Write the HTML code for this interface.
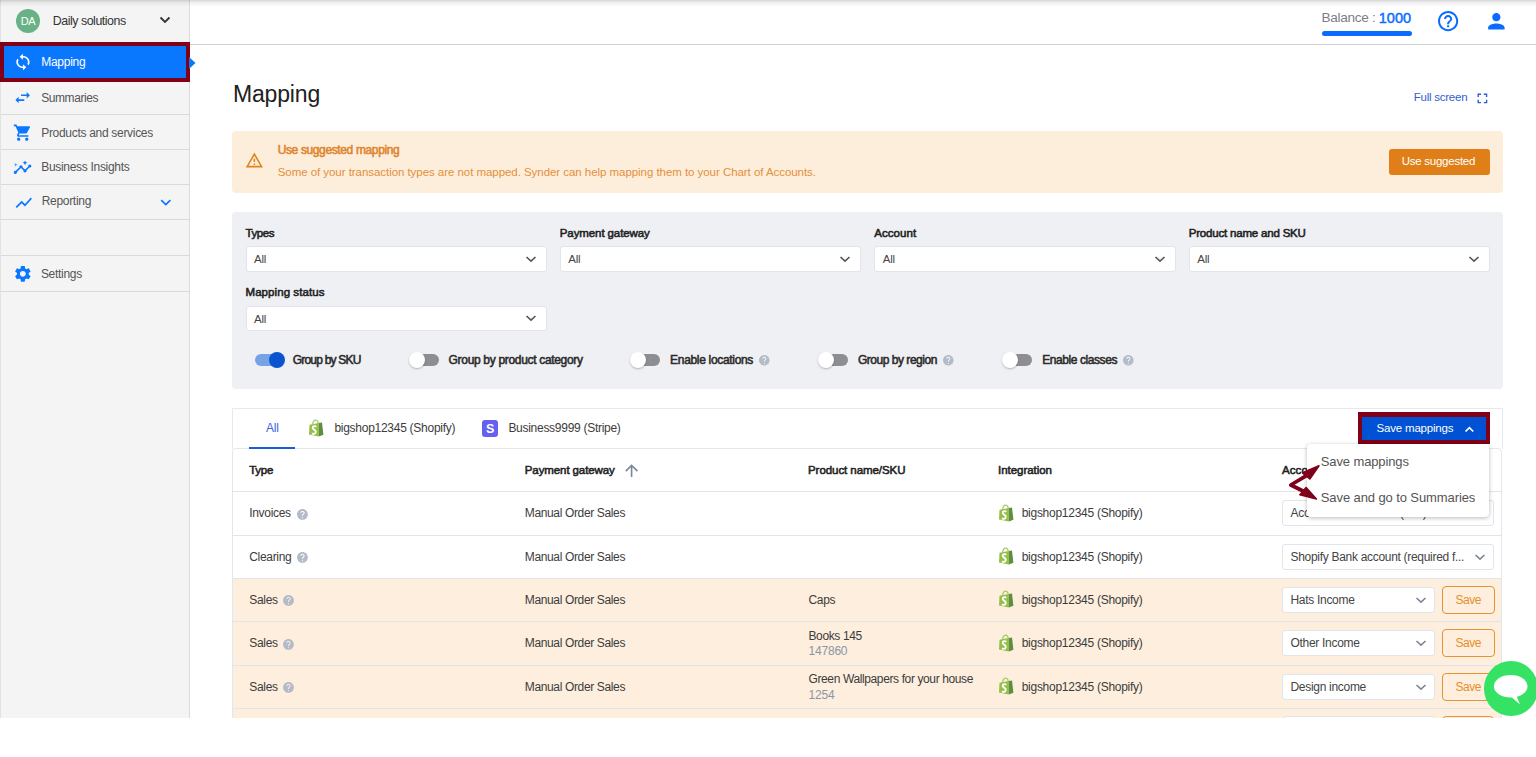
<!DOCTYPE html>
<html><head><meta charset="utf-8"><style>
html,body{margin:0;padding:0;background:#fff;}
body{width:1536px;height:757px;position:relative;overflow:hidden;font-family:"Liberation Sans", sans-serif;}
.t{position:absolute;white-space:nowrap;font-family:"Liberation Sans", sans-serif;}
.r{position:absolute;display:block;}
</style></head><body>
<div class="r" style="left:0.00px;top:0.00px;width:190.00px;height:718.00px;background:#f4f4f4;"></div>
<div class="r" style="left:189.00px;top:0.00px;width:1.00px;height:718.00px;background:#dcdcdc;"></div>
<div class="r" style="left:0.00px;top:0.00px;width:1.00px;height:718.00px;background:#e2e2e2;"></div>
<div class="r" style="left:16.00px;top:9.00px;width:24.00px;height:24.00px;background:#69b186;border-radius:50%;"></div>
<div class="t" style="left:16.00px;top:15.89px;font-size:11px;line-height:11px;color:#fff;font-weight:400;letter-spacing:0px;width:24px;text-align:center;letter-spacing:-0.3px;">DA</div>
<div class="t" style="left:52.80px;top:14.80px;font-size:12.4px;line-height:12.4px;color:#333;font-weight:400;letter-spacing:-0.47px;">Daily solutions</div>
<svg class="r" style="left:159.00px;top:16.00px" width="12" height="8" viewBox="0 0 12 8"><path d="M1.5 1.5 L6 6 L10.5 1.5" fill="none" stroke="#333" stroke-width="1.8"/></svg>
<div class="r" style="left:1.00px;top:114.00px;width:188.00px;height:1.00px;background:#d9d9d9;"></div>
<div class="r" style="left:1.00px;top:149.00px;width:188.00px;height:1.00px;background:#d9d9d9;"></div>
<div class="r" style="left:1.00px;top:184.00px;width:188.00px;height:1.00px;background:#d9d9d9;"></div>
<div class="r" style="left:1.00px;top:219.00px;width:188.00px;height:1.00px;background:#d9d9d9;"></div>
<div class="r" style="left:1.00px;top:255.00px;width:188.00px;height:1.00px;background:#d9d9d9;"></div>
<div class="r" style="left:1.00px;top:291.00px;width:188.00px;height:1.00px;background:#d9d9d9;"></div>
<div class="r" style="left:0.00px;top:41.80px;width:190.00px;height:40.20px;background:#0a77ff;"></div>
<div class="r" style="left:0.00px;top:41.80px;width:190.00px;height:40.20px;box-sizing:border-box;border:4px solid #820016;"></div>
<svg class="r" style="left:189.00px;top:57.00px" width="7" height="12" viewBox="0 0 7 12"><path d="M0 0 L6.5 6 L0 12 Z" fill="#0a77ff"/></svg>
<svg class="r" style="left:13.00px;top:53.00px;overflow:visible" width="19.92" height="18.00" viewBox="0 0 24 24" preserveAspectRatio="none"><path d="M12 4V1L8 5l4 4V6c3.31 0 6 2.69 6 6 0 1.01-.25 1.97-.7 2.8l1.46 1.46C19.54 15.03 20 13.57 20 12c0-4.42-3.58-8-8-8zm0 14c-3.31 0-6-2.69-6-6 0-1.01.25-1.97.7-2.8L5.24 7.74C4.46 8.97 4 10.43 4 12c0 4.42 3.58 8 8 8v3l4-4-4-4v3z" fill="#fff"/></svg>
<div class="t" style="left:41.20px;top:56.04px;font-size:12px;line-height:12px;color:#fff;font-weight:400;letter-spacing:-0.25px;">Mapping</div>
<svg class="r" style="left:13.20px;top:87.50px;overflow:visible" width="19.34" height="19.34" viewBox="0 0 24 24" preserveAspectRatio="none"><path d="M6.99 11L3 15l3.99 4v-3H14v-2H6.99v-3zM21 9l-3.99-4v3H10v2h7.01v3L21 9z" fill="#0a77ff"/></svg>
<div class="t" style="left:41.20px;top:91.54px;font-size:12px;line-height:12px;color:#555;font-weight:400;letter-spacing:-0.43px;">Summaries</div>
<svg class="r" style="left:13.10px;top:122.90px;overflow:visible" width="19.44" height="19.44" viewBox="0 0 24 24" preserveAspectRatio="none"><path d="M7 18c-1.1 0-1.99.9-1.99 2S5.9 22 7 22s2-.9 2-2-.9-2-2-2zM1 2v2h2l3.6 7.59-1.35 2.45c-.16.28-.25.61-.25.96 0 1.1.9 2 2 2h12v-2H7.42c-.14 0-.25-.11-.25-.25l.03-.12.9-1.63h7.45c.75 0 1.41-.41 1.75-1.03l3.58-6.49c.08-.14.12-.31.12-.48 0-.55-.45-1-1-1H5.21l-.94-2H1zm16 16c-1.1 0-1.99.9-1.99 2s.89 2 1.99 2 2-.9 2-2-.9-2-2-2z" fill="#0a77ff"/></svg>
<div class="t" style="left:41.20px;top:126.84px;font-size:12px;line-height:12px;color:#555;font-weight:400;letter-spacing:-0.3px;">Products and services</div>
<svg class="r" style="left:13.10px;top:158.20px;overflow:visible" width="19.20" height="19.20" viewBox="0 0 24 24" preserveAspectRatio="none"><path d="M21 8c-1.45 0-2.26 1.44-1.93 2.51l-3.55 3.56c-.3-.09-.74-.09-1.04 0l-2.55-2.55C12.27 10.45 11.46 9 10 9c-1.45 0-2.27 1.44-1.93 2.52l-4.56 4.55C2.44 15.74 1 16.55 1 18c0 1.1.9 2 2 2 1.45 0 2.26-1.44 1.93-2.51l4.55-4.56c.3.09.74.09 1.04 0l2.55 2.55C12.73 16.55 13.54 18 15 18c1.45 0 2.27-1.44 1.93-2.52l3.56-3.55c1.07.33 2.51-.48 2.51-1.93 0-1.1-.9-2-2-2zM15 9l.94-2.07L18 6l-2.06-.93L15 3l-.92 2.07L12 6l2.08.93zM3.5 11L4 9l2-.5L4 8l-.5-2L3 8l-2 .5L3 9z" fill="#0a77ff"/></svg>
<div class="t" style="left:41.20px;top:161.44px;font-size:12px;line-height:12px;color:#555;font-weight:400;letter-spacing:-0.3px;">Business Insights</div>
<svg class="r" style="left:14.00px;top:192.50px;overflow:visible" width="19.56" height="19.56" viewBox="0 0 24 24" preserveAspectRatio="none"><path d="M3.5 18.49l6-6.01 4 4L22 6.92l-1.41-1.41-7.09 7.97-4-4L2 16.99z" fill="#0a77ff"/></svg>
<div class="t" style="left:41.70px;top:195.24px;font-size:12px;line-height:12px;color:#555;font-weight:400;letter-spacing:-0.3px;">Reporting</div>
<svg class="r" style="left:160.00px;top:199.00px" width="12" height="8" viewBox="0 0 12 8"><path d="M1.2 1.2 L5.8 5.6 L10.4 1.2" fill="none" stroke="#0a77ff" stroke-width="1.7"/></svg>
<svg class="r" style="left:12.50px;top:263.70px;overflow:visible" width="19.68" height="19.68" viewBox="0 0 24 24" preserveAspectRatio="none"><path d="M19.14 12.94c.04-.3.06-.61.06-.94 0-.32-.02-.64-.07-.94l2.03-1.58c.18-.14.23-.41.12-.61l-1.92-3.32c-.12-.22-.37-.29-.59-.22l-2.39.96c-.5-.38-1.03-.7-1.62-.94l-.36-2.54c-.04-.24-.24-.41-.48-.41h-3.84c-.24 0-.43.17-.47.41l-.36 2.54c-.59.24-1.13.57-1.62.94l-2.39-.96c-.22-.08-.47 0-.59.22L2.74 8.87c-.12.21-.08.47.12.61l2.03 1.58c-.05.3-.09.63-.09.94s.02.64.07.94l-2.03 1.58c-.18.14-.23.41-.12.61l1.92 3.32c.12.22.37.29.59.22l2.39-.96c.5.38 1.03.7 1.62.94l.36 2.54c.05.24.24.41.48.41h3.84c.24 0 .44-.17.47-.41l.36-2.54c.59-.24 1.13-.56 1.62-.94l2.39.96c.22.08.47 0 .59-.22l1.92-3.32c.12-.22.07-.47-.12-.61l-2.01-1.58zM12 15.6c-1.98 0-3.6-1.62-3.6-3.6s1.62-3.6 3.6-3.6 3.6 1.62 3.6 3.6-1.62 3.6-3.6 3.6z" fill="#0a77ff"/></svg>
<div class="t" style="left:40.90px;top:267.94px;font-size:12px;line-height:12px;color:#555;font-weight:400;letter-spacing:-0.3px;">Settings</div>
<div class="r" style="left:190.00px;top:44.00px;width:1346.00px;height:1.00px;background:#cfd0d4;"></div>
<div class="r" style="left:0.00px;top:0.00px;width:1536.00px;height:7.00px;background:linear-gradient(rgba(0,0,0,.16),rgba(0,0,0,.05) 40%,rgba(0,0,0,0));"></div>
<div class="t" style="left:1321.50px;top:11.29px;font-size:13.6px;line-height:13.6px;color:#7b7f88;font-weight:400;letter-spacing:-0.3px;">Balance :</div>
<div class="t" style="left:1378.80px;top:10.53px;font-size:14.5px;line-height:14.5px;color:#0a6cff;font-weight:400;letter-spacing:0px;-webkit-text-stroke:0.45px currentColor;">1000</div>
<div class="r" style="left:1321.50px;top:31.20px;width:90.70px;height:5.00px;background:#0a6cff;border-radius:3px;"></div>
<svg class="r" style="left:1435.60px;top:9.00px;overflow:visible" width="24.24" height="24.24" viewBox="0 0 24 24" preserveAspectRatio="none"><path d="M11 18h2v-2h-2v2zm1-16C6.48 2 2 6.48 2 12s4.48 10 10 10 10-4.48 10-10S17.52 2 12 2zm0 18c-4.41 0-8-3.59-8-8s3.59-8 8-8 8 3.59 8 8-3.59 8-8 8zm0-14c-2.21 0-4 1.79-4 4h2c0-1.1.9-2 2-2s2 .9 2 2c0 2-3 1.75-3 5h2c0-2.25 3-2.5 3-5 0-2.21-1.79-4-4-4z" fill="#0a6cff"/></svg>
<svg class="r" style="left:1484.30px;top:8.90px;overflow:visible" width="24.72" height="24.72" viewBox="0 0 24 24" preserveAspectRatio="none"><path d="M12 12c2.21 0 4-1.79 4-4s-1.79-4-4-4-4 1.79-4 4 1.79 4 4 4zm0 2c-2.67 0-8 1.34-8 4v2h16v-2c0-2.66-5.33-4-8-4z" fill="#0a6cff"/></svg>
<div class="t" style="left:232.90px;top:82.63px;font-size:23px;line-height:23px;color:#212121;font-weight:400;letter-spacing:-0.15px;">Mapping</div>
<div class="t" style="left:1413.80px;top:92.27px;font-size:11.5px;line-height:11.5px;color:#2f5fd0;font-weight:400;letter-spacing:-0.25px;">Full screen</div>
<svg class="r" style="left:1474.30px;top:90.00px;overflow:visible" width="16.80" height="16.80" viewBox="0 0 24 24" preserveAspectRatio="none"><path d="M7 14H5v5h5v-2H7v-3zm-2-4h2V7h3V5H5v5zm12 7h-3v2h5v-5h-2v3zM14 5v2h3v3h2V5h-5z" fill="#2f5fd0"/></svg>
<div class="r" style="left:232.00px;top:131.00px;width:1271.00px;height:62.00px;background:#fdeedc;border-radius:4px;"></div>
<svg class="r" style="left:245.40px;top:150.70px;overflow:visible" width="18.72" height="18.72" viewBox="0 0 24 24" preserveAspectRatio="none"><path d="M12 5.99L19.53 19H4.47L12 5.99M12 2L1 21h22L12 2zm1 14h-2v2h2v-2zm0-6h-2v4h2v-4z" fill="#e0821e"/></svg>
<div class="t" style="left:277.70px;top:143.84px;font-size:12px;line-height:12px;color:#e0842a;font-weight:400;letter-spacing:-0.37px;-webkit-text-stroke:0.55px currentColor;">Use suggested mapping</div>
<div class="t" style="left:277.70px;top:167.17px;font-size:11.5px;line-height:11.5px;color:#e58f3a;font-weight:400;letter-spacing:-0.05px;">Some of your transaction types are not mapped. Synder can help mapping them to your Chart of Accounts.</div>
<div class="r" style="left:1389.20px;top:148.60px;width:100.60px;height:26.00px;background:#e07f17;border-radius:3px;"></div>
<div class="t" style="left:1401.70px;top:155.87px;font-size:11.5px;line-height:11.5px;color:#fff;font-weight:400;letter-spacing:-0.25px;">Use suggested</div>
<div class="r" style="left:232.00px;top:212.00px;width:1271.00px;height:176.50px;background:#eff0f4;border-radius:4px;"></div>
<div class="t" style="left:245.50px;top:227.57px;font-size:11.5px;line-height:11.5px;color:#222;font-weight:400;letter-spacing:-0.42px;-webkit-text-stroke:0.55px currentColor;">Types</div>
<div class="r" style="left:245.50px;top:246.00px;width:301.50px;height:25.50px;background:#fff;box-sizing:border-box;border:1px solid #e1e4ea;border-radius:3px;"></div>
<div class="t" style="left:254.00px;top:254.22px;font-size:11.5px;line-height:11.5px;color:#444;font-weight:400;letter-spacing:-0.2px;">All</div>
<svg class="r" style="left:525.00px;top:254.75px" width="12" height="8" viewBox="0 0 12 8"><path d="M1.5 2 L6 6.2 L10.5 2" fill="none" stroke="#555" stroke-width="1.6"/></svg>
<div class="t" style="left:559.80px;top:227.57px;font-size:11.5px;line-height:11.5px;color:#222;font-weight:400;letter-spacing:-0.1px;-webkit-text-stroke:0.55px currentColor;">Payment gateway</div>
<div class="r" style="left:559.80px;top:246.00px;width:301.50px;height:25.50px;background:#fff;box-sizing:border-box;border:1px solid #e1e4ea;border-radius:3px;"></div>
<div class="t" style="left:568.30px;top:254.22px;font-size:11.5px;line-height:11.5px;color:#444;font-weight:400;letter-spacing:-0.2px;">All</div>
<svg class="r" style="left:839.30px;top:254.75px" width="12" height="8" viewBox="0 0 12 8"><path d="M1.5 2 L6 6.2 L10.5 2" fill="none" stroke="#555" stroke-width="1.6"/></svg>
<div class="t" style="left:874.20px;top:227.57px;font-size:11.5px;line-height:11.5px;color:#222;font-weight:400;letter-spacing:0.07px;-webkit-text-stroke:0.55px currentColor;">Account</div>
<div class="r" style="left:874.20px;top:246.00px;width:301.50px;height:25.50px;background:#fff;box-sizing:border-box;border:1px solid #e1e4ea;border-radius:3px;"></div>
<div class="t" style="left:882.70px;top:254.22px;font-size:11.5px;line-height:11.5px;color:#444;font-weight:400;letter-spacing:-0.2px;">All</div>
<svg class="r" style="left:1153.70px;top:254.75px" width="12" height="8" viewBox="0 0 12 8"><path d="M1.5 2 L6 6.2 L10.5 2" fill="none" stroke="#555" stroke-width="1.6"/></svg>
<div class="t" style="left:1188.70px;top:227.57px;font-size:11.5px;line-height:11.5px;color:#222;font-weight:400;letter-spacing:-0.19px;-webkit-text-stroke:0.55px currentColor;">Product name and SKU</div>
<div class="r" style="left:1188.70px;top:246.00px;width:301.50px;height:25.50px;background:#fff;box-sizing:border-box;border:1px solid #e1e4ea;border-radius:3px;"></div>
<div class="t" style="left:1197.20px;top:254.22px;font-size:11.5px;line-height:11.5px;color:#444;font-weight:400;letter-spacing:-0.2px;">All</div>
<svg class="r" style="left:1468.20px;top:254.75px" width="12" height="8" viewBox="0 0 12 8"><path d="M1.5 2 L6 6.2 L10.5 2" fill="none" stroke="#555" stroke-width="1.6"/></svg>
<div class="t" style="left:245.50px;top:287.47px;font-size:11.5px;line-height:11.5px;color:#222;font-weight:400;letter-spacing:0.07px;-webkit-text-stroke:0.55px currentColor;">Mapping status</div>
<div class="r" style="left:245.50px;top:305.50px;width:301.50px;height:25.50px;background:#fff;box-sizing:border-box;border:1px solid #e1e4ea;border-radius:3px;"></div>
<div class="t" style="left:254.00px;top:313.72px;font-size:11.5px;line-height:11.5px;color:#444;font-weight:400;letter-spacing:-0.2px;">All</div>
<svg class="r" style="left:525.00px;top:314.25px" width="12" height="8" viewBox="0 0 12 8"><path d="M1.5 2 L6 6.2 L10.5 2" fill="none" stroke="#555" stroke-width="1.6"/></svg>
<div class="r" style="left:255.00px;top:354.20px;width:28.00px;height:11.80px;background:#75a3e6;border-radius:6px;"></div>
<div class="r" style="left:269.00px;top:352.00px;width:16.00px;height:16.00px;background:#0a55cf;border-radius:50%;"></div>
<div class="t" style="left:292.70px;top:354.24px;font-size:12px;line-height:12px;color:#2b2b2b;font-weight:400;letter-spacing:-0.79px;-webkit-text-stroke:0.55px #2b2b2b;">Group by SKU</div>
<div class="r" style="left:411.00px;top:354.20px;width:28.00px;height:11.80px;background:#8d8e93;border-radius:6px;"></div>
<div class="r" style="left:409.00px;top:352.00px;width:16.00px;height:16.00px;background:#fff;border-radius:50%;box-shadow:0 1px 2px rgba(0,0,0,.25);"></div>
<div class="t" style="left:448.60px;top:354.24px;font-size:12px;line-height:12px;color:#2b2b2b;font-weight:400;letter-spacing:-0.32px;-webkit-text-stroke:0.55px #2b2b2b;">Group by product category</div>
<div class="r" style="left:632.00px;top:354.20px;width:28.00px;height:11.80px;background:#8d8e93;border-radius:6px;"></div>
<div class="r" style="left:630.00px;top:352.00px;width:16.00px;height:16.00px;background:#fff;border-radius:50%;box-shadow:0 1px 2px rgba(0,0,0,.25);"></div>
<div class="t" style="left:670.10px;top:354.24px;font-size:12px;line-height:12px;color:#2b2b2b;font-weight:400;letter-spacing:-0.32px;-webkit-text-stroke:0.55px #2b2b2b;">Enable locations</div>
<svg class="r" style="left:758.35px;top:353.95px;overflow:visible" width="12.60" height="12.60" viewBox="0 0 24 24" preserveAspectRatio="none"><path d="M12 2C6.48 2 2 6.48 2 12s4.48 10 10 10 10-4.48 10-10S17.52 2 12 2zm1 17h-2v-2h2v2zm2.07-7.75l-.9.92C13.45 12.9 13 13.5 13 15h-2v-.5c0-1.1.45-2.1 1.17-2.83l1.24-1.26c.37-.36.59-.86.59-1.41 0-1.1-.9-2-2-2s-2 .9-2 2H8c0-2.21 1.79-4 4-4s4 1.79 4 4c0 .88-.36 1.68-.93 2.25z" fill="#b3bac8"/></svg>
<div class="r" style="left:820.00px;top:354.20px;width:28.00px;height:11.80px;background:#8d8e93;border-radius:6px;"></div>
<div class="r" style="left:818.00px;top:352.00px;width:16.00px;height:16.00px;background:#fff;border-radius:50%;box-shadow:0 1px 2px rgba(0,0,0,.25);"></div>
<div class="t" style="left:857.90px;top:354.24px;font-size:12px;line-height:12px;color:#2b2b2b;font-weight:400;letter-spacing:-0.47px;-webkit-text-stroke:0.55px #2b2b2b;">Group by region</div>
<svg class="r" style="left:942.15px;top:353.95px;overflow:visible" width="12.60" height="12.60" viewBox="0 0 24 24" preserveAspectRatio="none"><path d="M12 2C6.48 2 2 6.48 2 12s4.48 10 10 10 10-4.48 10-10S17.52 2 12 2zm1 17h-2v-2h2v2zm2.07-7.75l-.9.92C13.45 12.9 13 13.5 13 15h-2v-.5c0-1.1.45-2.1 1.17-2.83l1.24-1.26c.37-.36.59-.86.59-1.41 0-1.1-.9-2-2-2s-2 .9-2 2H8c0-2.21 1.79-4 4-4s4 1.79 4 4c0 .88-.36 1.68-.93 2.25z" fill="#b3bac8"/></svg>
<div class="r" style="left:1003.70px;top:354.20px;width:28.00px;height:11.80px;background:#8d8e93;border-radius:6px;"></div>
<div class="r" style="left:1001.70px;top:352.00px;width:16.00px;height:16.00px;background:#fff;border-radius:50%;box-shadow:0 1px 2px rgba(0,0,0,.25);"></div>
<div class="t" style="left:1042.20px;top:354.24px;font-size:12px;line-height:12px;color:#2b2b2b;font-weight:400;letter-spacing:-0.42px;-webkit-text-stroke:0.55px #2b2b2b;">Enable classes</div>
<svg class="r" style="left:1121.65px;top:353.95px;overflow:visible" width="12.60" height="12.60" viewBox="0 0 24 24" preserveAspectRatio="none"><path d="M12 2C6.48 2 2 6.48 2 12s4.48 10 10 10 10-4.48 10-10S17.52 2 12 2zm1 17h-2v-2h2v2zm2.07-7.75l-.9.92C13.45 12.9 13 13.5 13 15h-2v-.5c0-1.1.45-2.1 1.17-2.83l1.24-1.26c.37-.36.59-.86.59-1.41 0-1.1-.9-2-2-2s-2 .9-2 2H8c0-2.21 1.79-4 4-4s4 1.79 4 4c0 .88-.36 1.68-.93 2.25z" fill="#b3bac8"/></svg>
<div class="r" style="left:232.00px;top:408.00px;width:1271.00px;height:41.00px;box-sizing:border-box;border:1px solid #e6e9f0;border-bottom:none;background:#fff;"></div>
<div class="r" style="left:232.00px;top:448.00px;width:1270.00px;height:292.00px;box-sizing:border-box;border:1px solid #e3e6ee;border-radius:4px 4px 0 0;background:#fff;"></div>
<div class="t" style="left:266.00px;top:421.84px;font-size:12px;line-height:12px;color:#3d63dd;font-weight:400;letter-spacing:-0.2px;">All</div>
<div class="r" style="left:249.00px;top:446.50px;width:46.00px;height:2.00px;background:#1a5bd6;"></div>
<svg class="r" style="left:304.00px;top:416.00px" width="24" height="24" viewBox="0 0 24 24"><path d="M8.6 8.4 C9 5.6 10.2 4.2 11.6 4.2 C13 4.2 13.9 5.4 14.3 7.2" fill="none" stroke="#a6c96a" stroke-width="1.3"/><path d="M5.5 8.8 L14.8 6.9 L14.8 20.6 L5 18.6 Z" fill="#95bf47"/><path d="M14.8 6.9 L18 6.5 L19.4 18.8 L14.8 20.6 Z" fill="#5e8e3e"/><path d="M12.3 10.8 C11.3 9.8 8.6 9.7 8.7 11.9 C8.8 13.8 12 13.5 11.8 15.9 C11.6 18.2 9.2 18.3 8.1 17.3" fill="none" stroke="#fff" stroke-width="1.9"/></svg>
<div class="t" style="left:334.40px;top:421.84px;font-size:12px;line-height:12px;color:#3c3c3c;font-weight:400;letter-spacing:-0.27px;">bigshop12345 (Shopify)</div>
<div class="r" style="left:482.00px;top:420.30px;width:16.30px;height:16.70px;background:#6560f0;border-radius:3px;"></div>
<div class="t" style="left:482.00px;top:422.82px;font-size:12.5px;line-height:12.5px;color:#fff;font-weight:700;letter-spacing:0px;width:16.3px;text-align:center;">S</div>
<div class="t" style="left:508.40px;top:421.84px;font-size:12px;line-height:12px;color:#3c3c3c;font-weight:400;letter-spacing:-0.28px;">Business9999 (Stripe)</div>
<div class="t" style="left:249.20px;top:464.77px;font-size:11.5px;line-height:11.5px;color:#222;font-weight:400;letter-spacing:-0.25px;-webkit-text-stroke:0.55px currentColor;">Type</div>
<div class="t" style="left:524.80px;top:464.77px;font-size:11.5px;line-height:11.5px;color:#222;font-weight:400;letter-spacing:-0.1px;-webkit-text-stroke:0.55px currentColor;">Payment gateway</div>
<svg class="r" style="left:621.60px;top:460.80px;overflow:visible" width="19.20" height="19.20" viewBox="0 0 24 24" preserveAspectRatio="none"><path d="M4 12l1.41 1.41L11 7.83V20h2V7.83l5.58 5.59L20 12l-8-8-8 8z" fill="#7d8696"/></svg>
<div class="t" style="left:808.00px;top:464.77px;font-size:11.5px;line-height:11.5px;color:#222;font-weight:400;letter-spacing:-0.06px;-webkit-text-stroke:0.55px currentColor;">Product name/SKU</div>
<div class="t" style="left:998.00px;top:464.77px;font-size:11.5px;line-height:11.5px;color:#222;font-weight:400;letter-spacing:-0.04px;-webkit-text-stroke:0.55px currentColor;">Integration</div>
<div class="t" style="left:1282.00px;top:464.77px;font-size:11.5px;line-height:11.5px;color:#222;font-weight:400;letter-spacing:0.07px;-webkit-text-stroke:0.55px currentColor;">Account</div>
<div class="r" style="left:233.00px;top:578.00px;width:1268.00px;height:162.00px;background:#fdeedd;"></div>
<div class="r" style="left:233.00px;top:491.00px;width:1268.00px;height:1.00px;background:#e2e4e9;"></div>
<div class="r" style="left:233.00px;top:535.00px;width:1268.00px;height:1.00px;background:#e2e4e9;"></div>
<div class="r" style="left:233.00px;top:578.00px;width:1268.00px;height:1.00px;background:#e2e4e9;"></div>
<div class="r" style="left:233.00px;top:621.00px;width:1268.00px;height:1.00px;background:#e2e4e9;"></div>
<div class="r" style="left:233.00px;top:665.00px;width:1268.00px;height:1.00px;background:#e2e4e9;"></div>
<div class="r" style="left:233.00px;top:708.00px;width:1268.00px;height:1.00px;background:#e2e4e9;"></div>
<div class="t" style="left:249.20px;top:507.04px;font-size:12px;line-height:12px;color:#3c3c3c;font-weight:400;letter-spacing:-0.3px;">Invoices</div>
<svg class="r" style="left:296.25px;top:507.50px;overflow:visible" width="12.96" height="12.96" viewBox="0 0 24 24" preserveAspectRatio="none"><path d="M12 2C6.48 2 2 6.48 2 12s4.48 10 10 10 10-4.48 10-10S17.52 2 12 2zm1 17h-2v-2h2v2zm2.07-7.75l-.9.92C13.45 12.9 13 13.5 13 15h-2v-.5c0-1.1.45-2.1 1.17-2.83l1.24-1.26c.37-.36.59-.86.59-1.41 0-1.1-.9-2-2-2s-2 .9-2 2H8c0-2.21 1.79-4 4-4s4 1.79 4 4c0 .88-.36 1.68-.93 2.25z" fill="#b3bac8"/></svg>
<div class="t" style="left:524.80px;top:507.04px;font-size:12px;line-height:12px;color:#3c3c3c;font-weight:400;letter-spacing:-0.36px;">Manual Order Sales</div>
<svg class="r" style="left:993.80px;top:500.50px" width="24" height="24" viewBox="0 0 24 24"><path d="M8.6 8.4 C9 5.6 10.2 4.2 11.6 4.2 C13 4.2 13.9 5.4 14.3 7.2" fill="none" stroke="#a6c96a" stroke-width="1.3"/><path d="M5.5 8.8 L14.8 6.9 L14.8 20.6 L5 18.6 Z" fill="#95bf47"/><path d="M14.8 6.9 L18 6.5 L19.4 18.8 L14.8 20.6 Z" fill="#5e8e3e"/><path d="M12.3 10.8 C11.3 9.8 8.6 9.7 8.7 11.9 C8.8 13.8 12 13.5 11.8 15.9 C11.6 18.2 9.2 18.3 8.1 17.3" fill="none" stroke="#fff" stroke-width="1.9"/></svg>
<div class="t" style="left:1021.70px;top:507.04px;font-size:12px;line-height:12px;color:#3c3c3c;font-weight:400;letter-spacing:-0.27px;">bigshop12345 (Shopify)</div>
<div class="r" style="left:1282.00px;top:500.00px;width:212.00px;height:25.50px;background:#fff;box-sizing:border-box;border:1px solid #e1e4ea;border-radius:3px;"></div>
<div class="t" style="left:1290.50px;top:506.79px;font-size:12px;line-height:12px;color:#444;font-weight:400;letter-spacing:-0.3px;">Accounts Receivable (A/R)</div>
<svg class="r" style="left:1473.70px;top:508.75px" width="12" height="8" viewBox="0 0 12 8"><path d="M1.5 2 L6 6.2 L10.5 2" fill="none" stroke="#7d8696" stroke-width="1.6"/></svg>
<div class="t" style="left:249.20px;top:550.54px;font-size:12px;line-height:12px;color:#3c3c3c;font-weight:400;letter-spacing:-0.3px;">Clearing</div>
<svg class="r" style="left:296.25px;top:551.00px;overflow:visible" width="12.96" height="12.96" viewBox="0 0 24 24" preserveAspectRatio="none"><path d="M12 2C6.48 2 2 6.48 2 12s4.48 10 10 10 10-4.48 10-10S17.52 2 12 2zm1 17h-2v-2h2v2zm2.07-7.75l-.9.92C13.45 12.9 13 13.5 13 15h-2v-.5c0-1.1.45-2.1 1.17-2.83l1.24-1.26c.37-.36.59-.86.59-1.41 0-1.1-.9-2-2-2s-2 .9-2 2H8c0-2.21 1.79-4 4-4s4 1.79 4 4c0 .88-.36 1.68-.93 2.25z" fill="#b3bac8"/></svg>
<div class="t" style="left:524.80px;top:550.54px;font-size:12px;line-height:12px;color:#3c3c3c;font-weight:400;letter-spacing:-0.36px;">Manual Order Sales</div>
<svg class="r" style="left:993.80px;top:544.00px" width="24" height="24" viewBox="0 0 24 24"><path d="M8.6 8.4 C9 5.6 10.2 4.2 11.6 4.2 C13 4.2 13.9 5.4 14.3 7.2" fill="none" stroke="#a6c96a" stroke-width="1.3"/><path d="M5.5 8.8 L14.8 6.9 L14.8 20.6 L5 18.6 Z" fill="#95bf47"/><path d="M14.8 6.9 L18 6.5 L19.4 18.8 L14.8 20.6 Z" fill="#5e8e3e"/><path d="M12.3 10.8 C11.3 9.8 8.6 9.7 8.7 11.9 C8.8 13.8 12 13.5 11.8 15.9 C11.6 18.2 9.2 18.3 8.1 17.3" fill="none" stroke="#fff" stroke-width="1.9"/></svg>
<div class="t" style="left:1021.70px;top:550.54px;font-size:12px;line-height:12px;color:#3c3c3c;font-weight:400;letter-spacing:-0.27px;">bigshop12345 (Shopify)</div>
<div class="r" style="left:1282.00px;top:544.00px;width:212.00px;height:25.50px;background:#fff;box-sizing:border-box;border:1px solid #e1e4ea;border-radius:3px;"></div>
<div class="t" style="left:1290.50px;top:550.79px;font-size:12px;line-height:12px;color:#444;font-weight:400;letter-spacing:-0.3px;">Shopify Bank account (required f...</div>
<svg class="r" style="left:1473.70px;top:552.75px" width="12" height="8" viewBox="0 0 12 8"><path d="M1.5 2 L6 6.2 L10.5 2" fill="none" stroke="#7d8696" stroke-width="1.6"/></svg>
<div class="t" style="left:249.20px;top:593.54px;font-size:12px;line-height:12px;color:#3c3c3c;font-weight:400;letter-spacing:-0.3px;">Sales</div>
<svg class="r" style="left:281.55px;top:594.00px;overflow:visible" width="12.96" height="12.96" viewBox="0 0 24 24" preserveAspectRatio="none"><path d="M12 2C6.48 2 2 6.48 2 12s4.48 10 10 10 10-4.48 10-10S17.52 2 12 2zm1 17h-2v-2h2v2zm2.07-7.75l-.9.92C13.45 12.9 13 13.5 13 15h-2v-.5c0-1.1.45-2.1 1.17-2.83l1.24-1.26c.37-.36.59-.86.59-1.41 0-1.1-.9-2-2-2s-2 .9-2 2H8c0-2.21 1.79-4 4-4s4 1.79 4 4c0 .88-.36 1.68-.93 2.25z" fill="#b3bac8"/></svg>
<div class="t" style="left:524.80px;top:593.54px;font-size:12px;line-height:12px;color:#3c3c3c;font-weight:400;letter-spacing:-0.36px;">Manual Order Sales</div>
<div class="t" style="left:808.50px;top:593.54px;font-size:12px;line-height:12px;color:#3c3c3c;font-weight:400;letter-spacing:-0.3px;">Caps</div>
<svg class="r" style="left:993.80px;top:587.00px" width="24" height="24" viewBox="0 0 24 24"><path d="M8.6 8.4 C9 5.6 10.2 4.2 11.6 4.2 C13 4.2 13.9 5.4 14.3 7.2" fill="none" stroke="#a6c96a" stroke-width="1.3"/><path d="M5.5 8.8 L14.8 6.9 L14.8 20.6 L5 18.6 Z" fill="#95bf47"/><path d="M14.8 6.9 L18 6.5 L19.4 18.8 L14.8 20.6 Z" fill="#5e8e3e"/><path d="M12.3 10.8 C11.3 9.8 8.6 9.7 8.7 11.9 C8.8 13.8 12 13.5 11.8 15.9 C11.6 18.2 9.2 18.3 8.1 17.3" fill="none" stroke="#fff" stroke-width="1.9"/></svg>
<div class="t" style="left:1021.70px;top:593.54px;font-size:12px;line-height:12px;color:#3c3c3c;font-weight:400;letter-spacing:-0.27px;">bigshop12345 (Shopify)</div>
<div class="r" style="left:1282.00px;top:587.00px;width:153.00px;height:25.50px;background:#fff;box-sizing:border-box;border:1px solid #e1e4ea;border-radius:3px;"></div>
<div class="t" style="left:1290.50px;top:593.79px;font-size:12px;line-height:12px;color:#444;font-weight:400;letter-spacing:-0.3px;">Hats Income</div>
<svg class="r" style="left:1414.50px;top:595.75px" width="12" height="8" viewBox="0 0 12 8"><path d="M1.5 2 L6 6.2 L10.5 2" fill="none" stroke="#7d8696" stroke-width="1.6"/></svg>
<div class="r" style="left:1442.00px;top:586.00px;width:52.50px;height:27.50px;box-sizing:border-box;border:1px solid #e79335;border-radius:4px;"></div>
<div class="t" style="left:1455.50px;top:593.54px;font-size:12px;line-height:12px;color:#e58e2b;font-weight:400;letter-spacing:-0.45px;">Save</div>
<div class="t" style="left:249.20px;top:637.04px;font-size:12px;line-height:12px;color:#3c3c3c;font-weight:400;letter-spacing:-0.3px;">Sales</div>
<svg class="r" style="left:281.55px;top:637.50px;overflow:visible" width="12.96" height="12.96" viewBox="0 0 24 24" preserveAspectRatio="none"><path d="M12 2C6.48 2 2 6.48 2 12s4.48 10 10 10 10-4.48 10-10S17.52 2 12 2zm1 17h-2v-2h2v2zm2.07-7.75l-.9.92C13.45 12.9 13 13.5 13 15h-2v-.5c0-1.1.45-2.1 1.17-2.83l1.24-1.26c.37-.36.59-.86.59-1.41 0-1.1-.9-2-2-2s-2 .9-2 2H8c0-2.21 1.79-4 4-4s4 1.79 4 4c0 .88-.36 1.68-.93 2.25z" fill="#b3bac8"/></svg>
<div class="t" style="left:524.80px;top:637.04px;font-size:12px;line-height:12px;color:#3c3c3c;font-weight:400;letter-spacing:-0.36px;">Manual Order Sales</div>
<div class="t" style="left:808.50px;top:629.64px;font-size:12px;line-height:12px;color:#3c3c3c;font-weight:400;letter-spacing:-0.38px;">Books 145</div>
<div class="t" style="left:808.50px;top:645.14px;font-size:12px;line-height:12px;color:#8a96a8;font-weight:400;letter-spacing:-0.2px;">147860</div>
<svg class="r" style="left:993.80px;top:630.50px" width="24" height="24" viewBox="0 0 24 24"><path d="M8.6 8.4 C9 5.6 10.2 4.2 11.6 4.2 C13 4.2 13.9 5.4 14.3 7.2" fill="none" stroke="#a6c96a" stroke-width="1.3"/><path d="M5.5 8.8 L14.8 6.9 L14.8 20.6 L5 18.6 Z" fill="#95bf47"/><path d="M14.8 6.9 L18 6.5 L19.4 18.8 L14.8 20.6 Z" fill="#5e8e3e"/><path d="M12.3 10.8 C11.3 9.8 8.6 9.7 8.7 11.9 C8.8 13.8 12 13.5 11.8 15.9 C11.6 18.2 9.2 18.3 8.1 17.3" fill="none" stroke="#fff" stroke-width="1.9"/></svg>
<div class="t" style="left:1021.70px;top:637.04px;font-size:12px;line-height:12px;color:#3c3c3c;font-weight:400;letter-spacing:-0.27px;">bigshop12345 (Shopify)</div>
<div class="r" style="left:1282.00px;top:630.00px;width:153.00px;height:25.50px;background:#fff;box-sizing:border-box;border:1px solid #e1e4ea;border-radius:3px;"></div>
<div class="t" style="left:1290.50px;top:636.79px;font-size:12px;line-height:12px;color:#444;font-weight:400;letter-spacing:-0.3px;">Other Income</div>
<svg class="r" style="left:1414.50px;top:638.75px" width="12" height="8" viewBox="0 0 12 8"><path d="M1.5 2 L6 6.2 L10.5 2" fill="none" stroke="#7d8696" stroke-width="1.6"/></svg>
<div class="r" style="left:1442.00px;top:629.00px;width:52.50px;height:27.50px;box-sizing:border-box;border:1px solid #e79335;border-radius:4px;"></div>
<div class="t" style="left:1455.50px;top:637.04px;font-size:12px;line-height:12px;color:#e58e2b;font-weight:400;letter-spacing:-0.45px;">Save</div>
<div class="t" style="left:249.20px;top:680.54px;font-size:12px;line-height:12px;color:#3c3c3c;font-weight:400;letter-spacing:-0.3px;">Sales</div>
<svg class="r" style="left:281.55px;top:681.00px;overflow:visible" width="12.96" height="12.96" viewBox="0 0 24 24" preserveAspectRatio="none"><path d="M12 2C6.48 2 2 6.48 2 12s4.48 10 10 10 10-4.48 10-10S17.52 2 12 2zm1 17h-2v-2h2v2zm2.07-7.75l-.9.92C13.45 12.9 13 13.5 13 15h-2v-.5c0-1.1.45-2.1 1.17-2.83l1.24-1.26c.37-.36.59-.86.59-1.41 0-1.1-.9-2-2-2s-2 .9-2 2H8c0-2.21 1.79-4 4-4s4 1.79 4 4c0 .88-.36 1.68-.93 2.25z" fill="#b3bac8"/></svg>
<div class="t" style="left:524.80px;top:680.54px;font-size:12px;line-height:12px;color:#3c3c3c;font-weight:400;letter-spacing:-0.36px;">Manual Order Sales</div>
<div class="t" style="left:808.50px;top:673.14px;font-size:12px;line-height:12px;color:#3c3c3c;font-weight:400;letter-spacing:-0.38px;">Green Wallpapers for your house</div>
<div class="t" style="left:808.50px;top:688.64px;font-size:12px;line-height:12px;color:#8a96a8;font-weight:400;letter-spacing:-0.2px;">1254</div>
<svg class="r" style="left:993.80px;top:674.00px" width="24" height="24" viewBox="0 0 24 24"><path d="M8.6 8.4 C9 5.6 10.2 4.2 11.6 4.2 C13 4.2 13.9 5.4 14.3 7.2" fill="none" stroke="#a6c96a" stroke-width="1.3"/><path d="M5.5 8.8 L14.8 6.9 L14.8 20.6 L5 18.6 Z" fill="#95bf47"/><path d="M14.8 6.9 L18 6.5 L19.4 18.8 L14.8 20.6 Z" fill="#5e8e3e"/><path d="M12.3 10.8 C11.3 9.8 8.6 9.7 8.7 11.9 C8.8 13.8 12 13.5 11.8 15.9 C11.6 18.2 9.2 18.3 8.1 17.3" fill="none" stroke="#fff" stroke-width="1.9"/></svg>
<div class="t" style="left:1021.70px;top:680.54px;font-size:12px;line-height:12px;color:#3c3c3c;font-weight:400;letter-spacing:-0.27px;">bigshop12345 (Shopify)</div>
<div class="r" style="left:1282.00px;top:674.00px;width:153.00px;height:25.50px;background:#fff;box-sizing:border-box;border:1px solid #e1e4ea;border-radius:3px;"></div>
<div class="t" style="left:1290.50px;top:680.79px;font-size:12px;line-height:12px;color:#444;font-weight:400;letter-spacing:-0.3px;">Design income</div>
<svg class="r" style="left:1414.50px;top:682.75px" width="12" height="8" viewBox="0 0 12 8"><path d="M1.5 2 L6 6.2 L10.5 2" fill="none" stroke="#7d8696" stroke-width="1.6"/></svg>
<div class="r" style="left:1442.00px;top:673.00px;width:52.50px;height:27.50px;box-sizing:border-box;border:1px solid #e79335;border-radius:4px;"></div>
<div class="t" style="left:1455.50px;top:680.54px;font-size:12px;line-height:12px;color:#e58e2b;font-weight:400;letter-spacing:-0.45px;">Save</div>
<div class="r" style="left:1282.50px;top:716.00px;width:152.70px;height:25.00px;background:#fff;box-sizing:border-box;border:1px solid #e1e4ea;border-radius:3px;"></div>
<div class="r" style="left:1442.20px;top:716.00px;width:52.30px;height:27.00px;box-sizing:border-box;border:1px solid #e79335;border-radius:4px;"></div>
<div class="r" style="left:1358.00px;top:412.10px;width:132.20px;height:31.90px;background:#820016;"></div>
<div class="r" style="left:1362.00px;top:416.50px;width:124.30px;height:23.50px;background:#0051d3;"></div>
<div class="t" style="left:1376.60px;top:423.07px;font-size:11.5px;line-height:11.5px;color:#fff;font-weight:400;letter-spacing:-0.2px;">Save mappings</div>
<svg class="r" style="left:1463.50px;top:424.50px" width="11" height="8" viewBox="0 0 11 8"><path d="M1.5 6.5 L5.4 2.6 L9.3 6.5" fill="none" stroke="#fff" stroke-width="1.7"/></svg>
<div class="r" style="left:1307.00px;top:444.40px;width:182.00px;height:72.90px;background:#fff;border-radius:4px;box-shadow:0 1px 4px rgba(0,0,0,.28);"></div>
<div class="t" style="left:1320.80px;top:454.80px;font-size:13px;line-height:13px;color:#555;font-weight:400;letter-spacing:-0.12px;">Save mappings</div>
<div class="t" style="left:1320.80px;top:490.70px;font-size:13px;line-height:13px;color:#555;font-weight:400;letter-spacing:-0.1px;">Save and go to Summaries</div>
<svg class="r" style="left:1284.00px;top:460.00px" width="40" height="44" viewBox="0 0 40 44"><g fill="#80001a" stroke="#80001a" stroke-width="1.6" stroke-linejoin="round"><path d="M35 5.8 L18.6 12.8 L25.8 19 Z"/><path d="M32.4 39 L22.1 27.5 L15.9 34.8 Z"/></g><path d="M22 15.8 L6.8 25 L19 31" fill="none" stroke="#80001a" stroke-width="3.7" stroke-linecap="round" stroke-linejoin="round"/></svg>
<div class="r" style="left:0.00px;top:718.00px;width:1536.00px;height:39.00px;background:#fff;"></div>
<div class="r" style="left:1484.00px;top:661.00px;width:54.00px;height:54.50px;background:#35e264;border-radius:50%;"></div>
<svg class="r" style="left:1490.00px;top:672.00px" width="42" height="36" viewBox="0 0 42 36"><ellipse cx="20.7" cy="14.3" rx="16.8" ry="11.3" fill="#fff"/><path d="M18 22 L30 32.5 L25.5 21.5 Z" fill="#fff"/></svg>
</body></html>
